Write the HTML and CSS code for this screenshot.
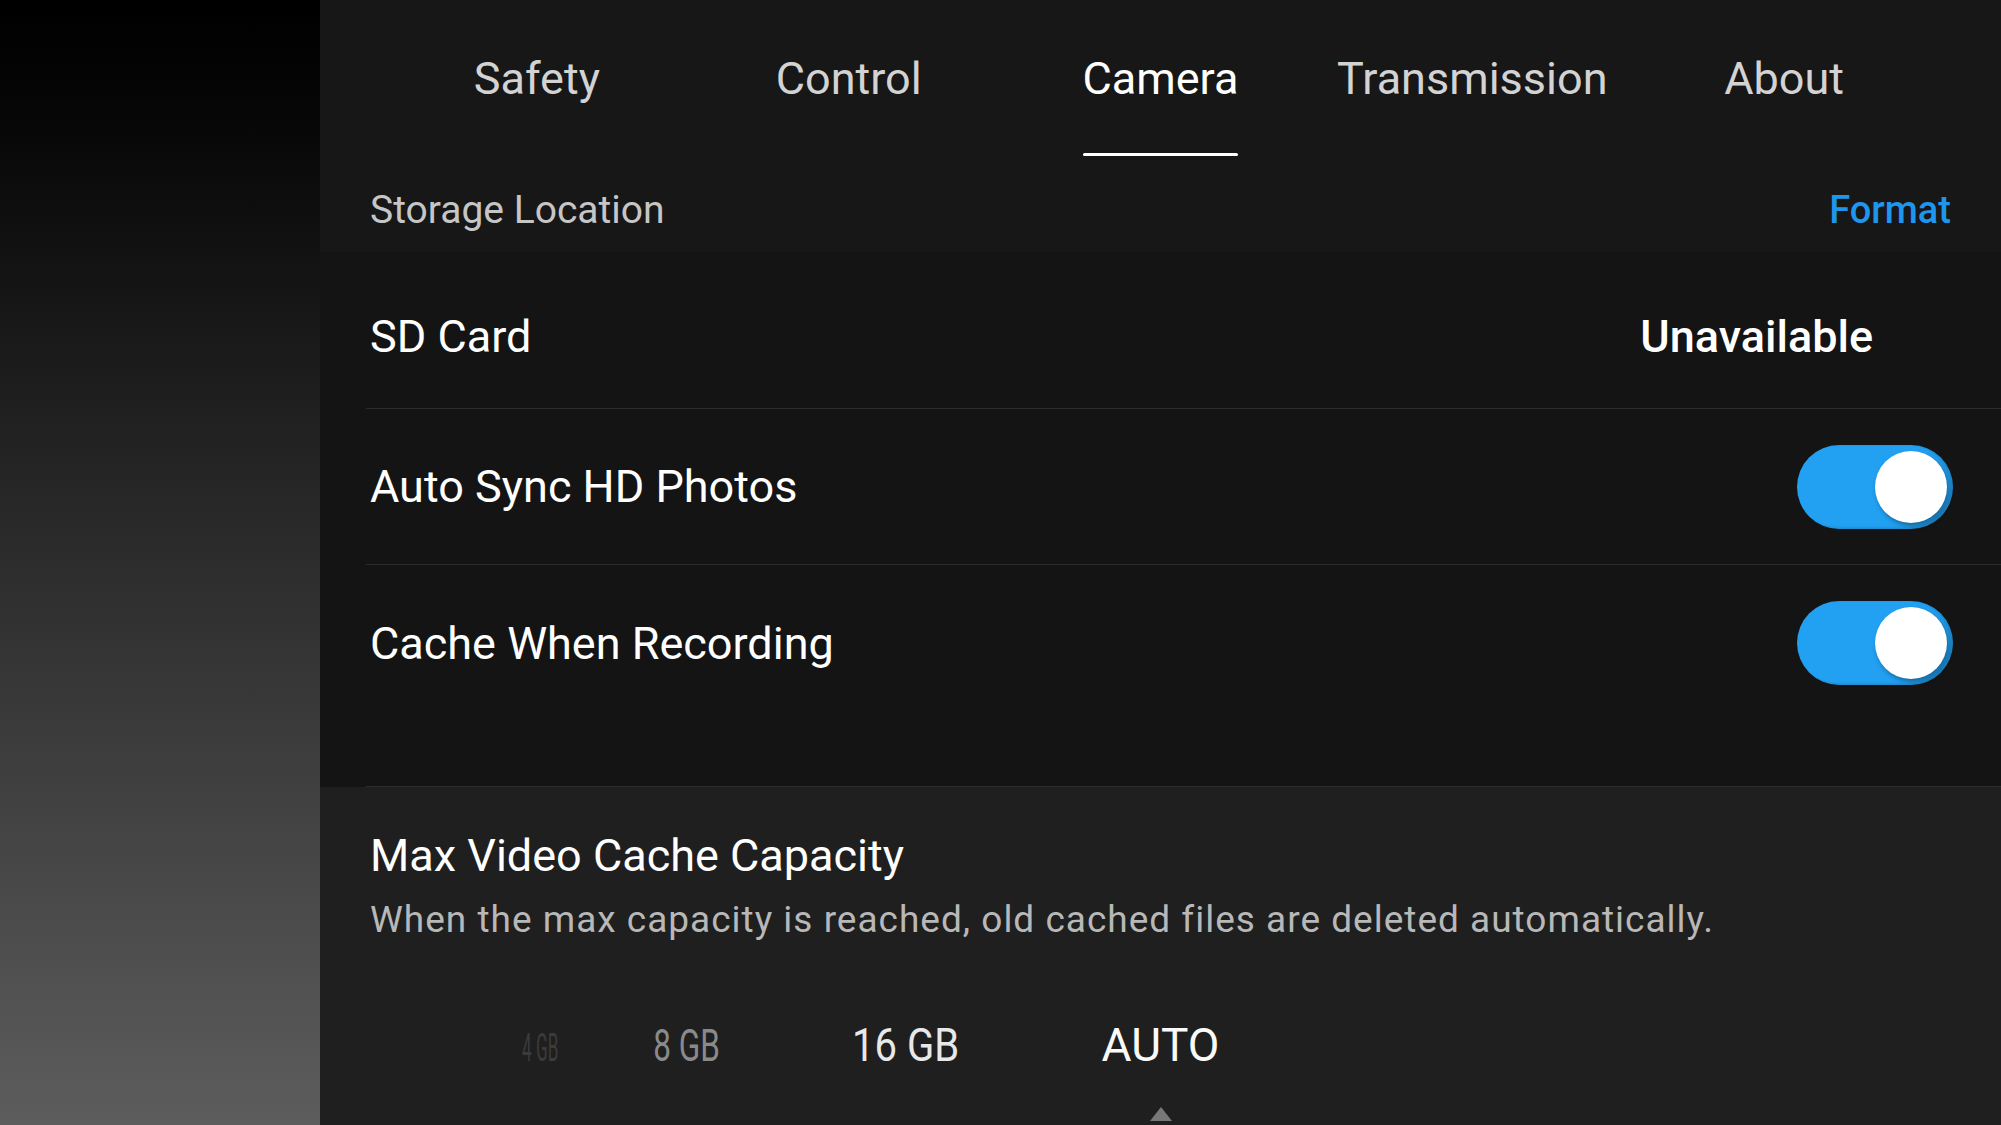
FILE: index.html
```html
<!DOCTYPE html>
<html lang="en">
<head>
<meta charset="utf-8">
<title>Camera Settings</title>
<link rel="stylesheet" href="styles.css">
</head>
<body>
<div class="app">
  <aside class="side"></aside>
  <main class="panel">
    <nav class="tabs">
      <div class="tab"><span class="tab-label">Safety</span></div>
      <div class="tab"><span class="tab-label">Control</span></div>
      <div class="tab active"><span class="tab-label">Camera</span></div>
      <div class="tab"><span class="tab-label">Transmission</span></div>
      <div class="tab"><span class="tab-label">About</span></div>
    </nav>
    <div class="section-head">
      <span class="section-title">Storage Location</span>
      <span class="link">Format</span>
    </div>
    <div class="list">
      <div class="row first">
        <span class="row-title">SD Card</span>
        <span class="row-value">Unavailable</span>
      </div>
      <div class="row">
        <span class="row-title">Auto Sync HD Photos</span>
        <span class="toggle on"><span class="knob"></span></span>
      </div>
      <div class="row tall">
        <span class="row-title">Cache When Recording</span>
        <span class="toggle on"><span class="knob"></span></span>
      </div>
    </div>
    <section class="cache">
      <div class="cache-title">Max Video Cache Capacity</div>
      <div class="cache-desc">When the max capacity is reached, old cached files are deleted automatically.</div>
      <div class="picker">
        <div class="cell c4"><span>4 GB</span></div>
        <div class="cell c8"><span>8 GB</span></div>
        <div class="cell c16"><span>16 GB</span></div>
        <div class="cell cauto"><span>AUTO</span></div>
      </div>
      <div class="pointer"><span class="tri"></span></div>
    </section>
  </main>
</div>
</body>
</html>
```
FILE: styles.css
```css
html, body {
  margin: 0;
  height: 100%;
}
body {
  background: #161616;
  font-family: Roboto, "Liberation Sans", sans-serif;
  overflow: hidden;
}
.app {
  display: flex;
  height: 1125px;
}
.side {
  width: 320px;
  flex: none;
  background: linear-gradient(#000 0%, #060606 10%, #5d5d5d 100%);
}
.panel {
  flex: 1;
  min-width: 0;
  display: flex;
  flex-direction: column;
  background: #171717;
}

/* tabs */
.tabs {
  display: grid;
  grid-template-columns: repeat(5, 1fr);
  padding: 0 61px;
  height: 157px;
}
.tab {
  display: flex;
  justify-content: center;
  padding-top: 56px;
}
.tab-label {
  display: flex;
  flex-direction: column;
  font-size: 45px;
  line-height: 45px;
  color: #d3d3d3;
}
.tab-label::after {
  content: "";
  height: 3px;
  margin-top: 52px;
  border-radius: 2px;
}
.tab.active .tab-label {
  color: #fff;
}
.tab.active .tab-label::after {
  background: #fff;
}

/* section header */
.section-head {
  height: 95px;
  box-sizing: border-box;
  padding: 34px 50px 0 50px;
  display: flex;
  justify-content: space-between;
  align-items: flex-start;
}
.section-title {
  font-size: 39px;
  line-height: 39px;
  color: #c6c6c6;
}
.link {
  font-size: 38px;
  line-height: 39px;
  font-weight: 500;
  color: #1f95ec;
}

/* list */
.list {
  background: #141414;
}
.row {
  margin-left: 46px;
  height: 156px;
  box-sizing: border-box;
  border-bottom: 1px solid #2c2c2c;
  display: flex;
  align-items: center;
  justify-content: space-between;
  padding: 0 48px 0 4px;
}
.row.first {
  height: 157px;
  padding-top: 12px;
}
.row.tall {
  height: 222px;
  padding-bottom: 65px;
}
.row-title {
  font-size: 45px;
  color: #fff;
}
.row-value {
  font-size: 45px;
  font-weight: 500;
  color: #fff;
  margin-right: 80px;
}
.toggle {
  width: 156px;
  height: 84px;
  border-radius: 42px;
  background: #22a0f1;
  display: flex;
  align-items: center;
  justify-content: flex-end;
  padding: 0 6px;
  box-sizing: border-box;
  box-shadow: inset -3px -1px 3px rgba(0, 0, 0, 0.18);
}
.knob {
  width: 72px;
  height: 72px;
  border-radius: 50%;
  background: #fff;
  box-shadow: 2px 3px 5px rgba(0, 0, 0, 0.35);
}

/* cache capacity */
.cache {
  flex: 1;
  background: #1f1f1f;
  padding-top: 42px;
}
.cache-title {
  padding-left: 50px;
  font-size: 45px;
  line-height: 54px;
  color: #fff;
}
.cache-desc {
  padding-left: 50px;
  margin-top: 15px;
  font-size: 37px;
  line-height: 43px;
  letter-spacing: 1px;
  color: #b8b8b8;
}
.picker {
  display: flex;
  align-items: baseline;
  margin-top: 77px;
  margin-left: 166px;
}
.cell {
  display: flex;
  justify-content: center;
  font-size: 46px;
  line-height: 55px;
  font-weight: 400;
}
.cell span {
  display: inline-block;
  white-space: nowrap;
}
.c4 {
  width: 109px;
  font-size: 39px;
  color: #3b3b3b;
}
.c4 span {
  transform: scaleX(0.44);
}
.c8 {
  width: 183px;
  font-size: 45px;
  color: #8a8a8a;
}
.c8 span {
  transform: scaleX(0.7);
}
.c16 {
  width: 255px;
  color: #e8e8e8;
}
.c16 span {
  transform: scaleX(0.87);
}
.cauto {
  width: 255px;
  color: #fafafa;
}
.pointer {
  display: flex;
  justify-content: center;
  margin-top: 31px;
}
.tri {
  width: 0;
  height: 0;
  border-left: 11px solid transparent;
  border-right: 11px solid transparent;
  border-bottom: 14px solid #787878;
}
```
